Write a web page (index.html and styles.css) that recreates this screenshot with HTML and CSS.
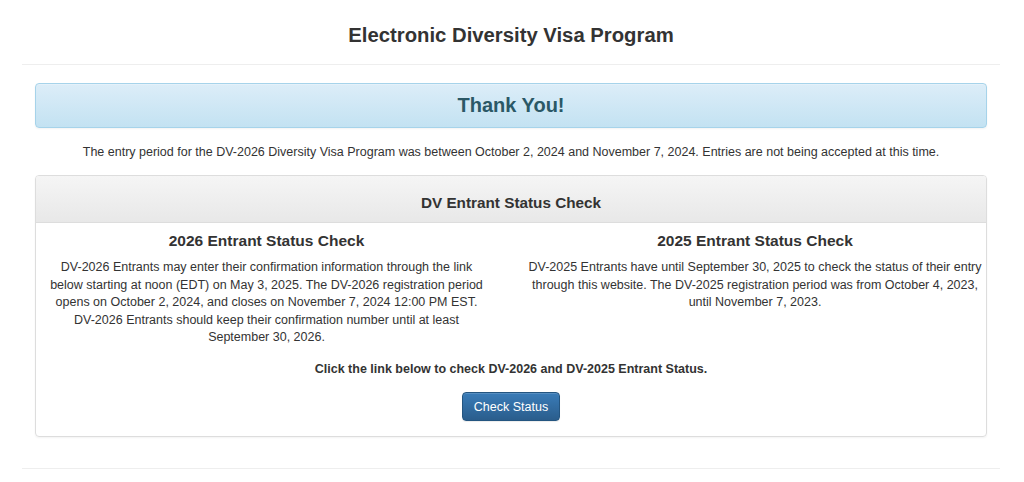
FILE: index.html
```html
<!DOCTYPE html>
<html lang="en">

<head>
    <meta charset="UTF-8">
    <meta name="viewport" content="width=device-width, initial-scale=1.0">
    <title>Electronic Diversity Visa Program</title>
    <link rel="stylesheet" href="styles.css">
</head>

<body>

    <div class="wrapper">
        <h1 class="page-title">Electronic Diversity Visa Program</h1>
        <hr class="rule">

        <div class="content">
            <!-- alert banner -->
            <div class="alert-info">
                <h2>Thank You!</h2>
            </div>

            <p class="notice">The entry period for the DV-2026 Diversity Visa Program was between October 2, 2024 and November 7, 2024. Entries are not being accepted at this time.</p>

            <!-- status check panel -->
            <div class="panel">
                <div class="panel-heading">DV Entrant Status Check</div>
                <div class="panel-body">
                    <div class="status-cols">
                        <div class="status-col left">
                            <h3>2026 Entrant Status Check</h3>
                            <p>DV-2026 Entrants may enter their confirmation information through the link below starting at noon (EDT) on May 3, 2025. The DV-2026 registration period opens on October 2, 2024, and closes on November 7, 2024 12:00 PM EST. DV-2026 Entrants should keep their confirmation number until at least September 30, 2026.</p>
                        </div>
                        <div class="status-col right">
                            <h3>2025 Entrant Status Check</h3>
                            <p>DV-2025 Entrants have until September 30, 2025 to check the status of their entry through this website. The DV-2025 registration period was from October 4, 2023, until November 7, 2023.</p>
                        </div>
                    </div>
                    <p class="link-note">Click the link below to check DV-2026 and DV-2025 Entrant Status.</p>
                    <div class="btn-row">
                        <a class="btn-primary" href="#">Check Status</a>
                    </div>
                </div>
            </div>
        </div>

        <hr class="rule bottom">
    </div>

</body>

</html>
```

FILE: styles.css
```css
body {
    font-family: "Liberation Sans", Arial, sans-serif;
    margin: 0;
    background-color: #fff;
    color: #333;
    font-size: 12.5px;
}

.wrapper {
    margin: 0 24px 0 22px;
}

.page-title {
    margin: 0;
    padding-top: 24px;
    height: 40px;
    font-size: 20.3px;
    font-weight: bold;
    text-align: center;
    color: #333;
}

.rule {
    margin: 0;
    border: 0;
    border-top: 1px solid #eee;
}

.rule.bottom {
    margin-top: 31px;
}

.content {
    padding: 18px 13px 0;
}

.alert-info {
    height: 43px;
    display: flex;
    align-items: center;
    justify-content: center;
    border: 1px solid #a6d3ea;
    border-radius: 4px;
    background-image: linear-gradient(to bottom, #dcedf8 0, #c3e2f2 100%);
    box-shadow: inset 0 1px 0 rgba(255, 255, 255, 0.25), 0 1px 2px rgba(0, 0, 0, 0.05);
}

.alert-info h2 {
    margin: 0;
    font-size: 20px;
    font-weight: bold;
    color: #2b5866;
}

.notice {
    margin: 16px 0 14px;
    text-align: center;
    line-height: 17px;
}

.panel {
    border: 1px solid #ddd;
    border-radius: 4px;
    box-shadow: 0 1px 2px rgba(0, 0, 0, 0.05);
}

.panel-heading {
    height: 39px;
    padding-top: 7px;
    display: flex;
    align-items: center;
    justify-content: center;
    border-bottom: 1px solid #ddd;
    border-radius: 3px 3px 0 0;
    background-image: linear-gradient(to bottom, #f5f5f5 0, #e8e8e8 100%);
    font-size: 15.3px;
    font-weight: bold;
    color: #333;
}

.panel-body {
    padding: 9px 0 15px;
}

.status-cols {
    display: grid;
    grid-template-columns: 461px 1fr;
    column-gap: 27px;
}

.status-col {
    text-align: center;
}

.status-col.left {
    padding: 0 12px;
}

.status-col h3 {
    margin: 0 0 9px;
    font-size: 15.5px;
    font-weight: bold;
}

.status-col p {
    margin: 0;
    line-height: 17.5px;
}

.link-note {
    margin: 15px 0 16px;
    text-align: center;
    font-weight: bold;
}

.btn-row {
    display: flex;
    justify-content: center;
}

.btn-primary {
    display: inline-block;
    padding: 7px 11px 6px;
    border: 1px solid #245580;
    border-radius: 4px;
    background-image: linear-gradient(to bottom, #3a7cb8 0, #2a5d8c 100%);
    color: #fff;
    text-decoration: none;
    line-height: 14px;
    box-shadow: inset 0 1px 0 rgba(255, 255, 255, 0.15), 0 1px 1px rgba(0, 0, 0, 0.075);
}
```
